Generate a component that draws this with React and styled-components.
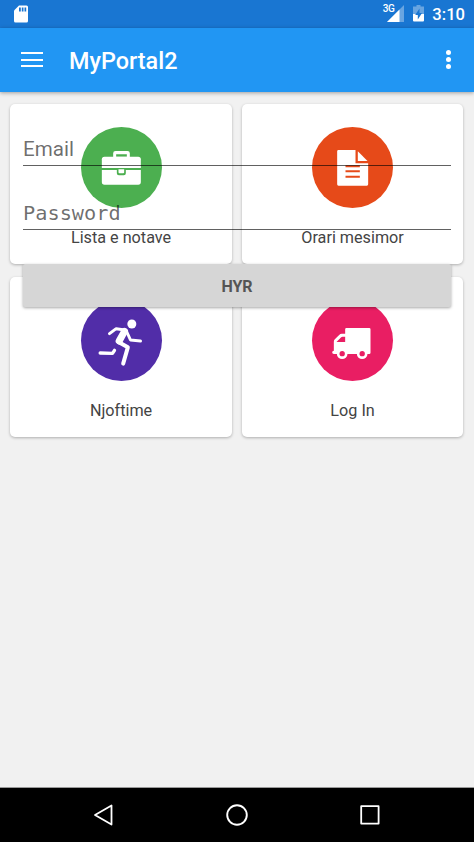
import React from 'react'
import styled, { createGlobalStyle } from 'styled-components'

const GlobalStyle = createGlobalStyle`
    * { box-sizing: border-box; }
    body {
        margin: 0;
        font-family: Roboto, sans-serif;
        overflow: hidden;
    }
`;

const Screen = styled.div`
    display: flex;
    flex-direction: column;
    width: 474px;
    height: 842px;
    background: #f1f1f1;
`;

const StatusBar = styled.header`
    display: flex;
    align-items: center;
    height: 27.5px;
    padding: 0 9px 0 14px;
    background: #1976d2;
    color: #fff;
`;

const StatusIcons = styled.div`
    display: flex;
    align-items: center;
    margin-left: auto;
`;

const Network = styled.span`
    align-self: flex-start;
    margin-right: -7px;
    font-size: 10px;
    font-weight: 500;
    line-height: 12px;
    letter-spacing: -0.4px;
`;

const Clock = styled.span`
    margin-left: 8px;
    font-size: 16.6px;
    font-weight: 500;
    line-height: 20px;
    padding-top: 2px;
`;

const Toolbar = styled.div`
    position: relative;
    display: flex;
    align-items: center;
    height: 64.5px;
    padding: 0 23px 0 21px;
    background: #2196f3;
    box-shadow: 0 1px 4px rgba(0, 0, 0, 0.35);
    flex: none;
`;

const Title = styled.h1`
    flex: 1;
    margin: 3px 0 0 26px;
    color: #fff;
    font-size: 23.4px;
    font-weight: 500;
    line-height: 28px;
`;

const MenuIcon = styled.div`
    display: flex;
    flex-direction: column;
    gap: 4.2px;
    width: 22px;

    span {
        height: 2.2px;
        background: #fff;
    }
`;

const MoreIcon = styled.div`
    display: flex;
    flex-direction: column;
    gap: 2px;

    span {
        width: 5px;
        height: 5px;
        border-radius: 50%;
        background: #fff;
    }
`;

const Content = styled.main`
    position: relative;
    flex: 1;
`;

const CardGrid = styled.div`
    display: grid;
    grid-template-columns: 1fr 1fr;
    grid-auto-rows: 160px;
    gap: 13px 10px;
    padding: 12.3px 10.7px 0 10.3px;
`;

const Card = styled.section`
    display: flex;
    flex-direction: column;
    align-items: center;
    padding-top: 23px;
    background: #fff;
    border-radius: 5px;
    box-shadow: 0 1px 3px rgba(0, 0, 0, 0.28);
`;

const Circle = styled.div`
    width: 81px;
    height: 81px;
    border-radius: 50%;
    background: ${props => props.$color};

    svg { display: block; }
`;

const CardLabel = styled.p`
    margin: 19.6px 0 0;
    color: #444;
    font-size: 16.2px;
    line-height: 20px;
`;

// sits on top of the cards
const LoginForm = styled.form`
    position: absolute;
    top: 0;
    left: 0;
    right: 0;
    display: flex;
    flex-direction: column;
    padding: 38.3px 23px 0;
`;

const Field = styled.input`
    height: 35.5px;
    margin-bottom: 29px;
    padding: 2px 0 0;
    border: 0;
    border-bottom: 1px solid rgba(0, 0, 0, 0.62);
    border-radius: 0;
    outline: none;
    background: transparent;
    font-family: ${props => props.$mono ? '"DejaVu Sans Mono", monospace' : 'Roboto, sans-serif'};
    font-size: ${props => props.$mono ? '20.3px' : '20.6px'};

    &::placeholder {
        color: rgba(0, 0, 0, 0.58);
        opacity: 1;
    }
`;

const SubmitButton = styled.button`
    height: 43px;
    margin-top: 4.5px;
    padding: 2px 0 0;
    border: 0;
    border-radius: 2px;
    background: #d6d6d6;
    box-shadow: 0 1px 3px rgba(0, 0, 0, 0.35);
    color: #555;
    font-family: Roboto, sans-serif;
    font-size: 16px;
    font-weight: 700;
`;

const NavBar = styled.nav`
    display: flex;
    justify-content: space-between;
    align-items: center;
    height: 55.5px;
    padding: 0 93px 0 92px;
    background: #000;
    border-top: 1px solid #999;
`;

const SdIcon = () => (
    <svg width="14" height="18" viewBox="0 0 14 18">
        <path d="M5 .5h7.5Q14 .5 14 2v14q0 1.5-1.5 1.5h-11Q0 17.5 0 16V5.5z" fill="#fff" />
        <path d="M5 2.5h1.8v4H5zM7.8 2.5h1.7v4H7.8zM10.5 2.5h1.7v4h-1.7z" fill="#1976d2" />
    </svg>
)

const SignalIcon = () => (
    <svg width="17" height="17" viewBox="0 0 17 17">
        <path d="M17 0v17H0z" fill="#fff" opacity=".35" />
        <path d="M12.5 4.5V17H0z" fill="#fff" />
    </svg>
)

const BatteryWrap = styled.span`
    display: flex;
    margin-left: 9px;
`;

const BatteryIcon = () => (
    <BatteryWrap>
        <svg width="11" height="17" viewBox="0 0 11 17">
            <path d="M3.5 0h4v1.5H11V9H0V1.5h3.5z" fill="#fff" opacity=".35" />
            <path d="M0 9h11v6.5q0 1-1 1H1q-1 0-1-1z" fill="#fff" />
            <path d="M6.5 3.5 2.2 10h2.6v4.5L9 8H6.5z" fill="#1976d2" />
        </svg>
    </BatteryWrap>
)

const BriefcaseIcon = () => (
    <svg width="81" height="81" viewBox="-28.5 -9 243 243" fill="#fff">
        <path fillRule="evenodd" d="M68 82V70q0-7 7-7h36q7 0 7 7v12zM77 73v7h32v-7z" />
        <path d="M42 80h101q8 0 8 8v26H34V88q0-8 8-8z" />
        <path d="M34 120h45v10q0 6 6 6h15q6 0 6-6v-10h45v36q0 8-8 8H42q-8 0-8-8z" />
        <path d="M84 118h17v9q0 3-3 3H87q-3 0-3-3z" />
    </svg>
)

const DocumentIcon = () => (
    <svg width="81" height="81" viewBox="230.5 96 243 243" fill="#fff">
        <path fillRule="evenodd" d="M310 165h51v40h38v63q0 4-4 4h-85q-4 0-4-4v-99q0-4 4-4zM331 211v6h43v-6zM331 226v6h43v-6zM331 242v6h43v-6z" />
        <path d="M368 169l29 29h-29z" />
    </svg>
)

const RunnerIcon = () => (
    <svg width="81" height="81" viewBox="-28.5 -30 243 243" fill="none" stroke="#fff" strokeLinecap="round" strokeLinejoin="round">
        <circle cx="124" cy="42" r="13.5" fill="#fff" stroke="none" />
        <path d="M57 71l20-15 26 4" strokeWidth="9" />
        <path d="M109 66l11 24 30 3" strokeWidth="9" />
        <path d="M102 64L86 93" strokeWidth="21" />
        <path d="M84 96l28 16-14 49" strokeWidth="12" />
        <path d="M29 129l37 1 6-9" strokeWidth="10" />
    </svg>
)

const TruckIcon = () => (
    <svg width="81" height="81" viewBox="-30.5 -30 243 243" fill="#fff">
        <path fillRule="evenodd" d="M73 54h68q4 0 4 4v70q0 4-4 4H35q-5 0-5-5t5-5V95q0-4 3-7l13-13q3-4 8-4h10V58q0-4 4-4zM43 96h26V80h-8q-2 0-4 2z" />
        <circle cx="60" cy="131" r="16" />
        <circle cx="120" cy="131" r="16" />
        <circle cx="60" cy="131" r="8" fill="#e91e63" />
        <circle cx="120" cy="131" r="8" fill="#e91e63" />
    </svg>
)

const cards = [
    { label: 'Lista e notave', color: '#4caf50', Icon: BriefcaseIcon },
    { label: 'Orari mesimor', color: '#e64a19', Icon: DocumentIcon },
    { label: 'Njoftime', color: '#512da8', Icon: RunnerIcon },
    { label: 'Log In', color: '#e91e63', Icon: TruckIcon },
]

const App = () => {
    return (
        <Screen>
            <GlobalStyle />
            <StatusBar>
                <SdIcon />
                <StatusIcons>
                    <Network>3G</Network>
                    <SignalIcon />
                    <BatteryIcon />
                    <Clock>3:10</Clock>
                </StatusIcons>
            </StatusBar>
            <Toolbar>
                <MenuIcon><span /><span /><span /></MenuIcon>
                <Title>MyPortal2</Title>
                <MoreIcon><span /><span /><span /></MoreIcon>
            </Toolbar>
            <Content>
                <CardGrid>
                    {cards.map(({ label, color, Icon }) => (
                        <Card key={label}>
                            <Circle $color={color}><Icon /></Circle>
                            <CardLabel>{label}</CardLabel>
                        </Card>
                    ))}
                </CardGrid>
                <LoginForm onSubmit={e => e.preventDefault()}>
                    <Field type="email" placeholder="Email" />
                    <Field type="password" placeholder="Password" $mono />
                    <SubmitButton>HYR</SubmitButton>
                </LoginForm>
            </Content>
            <NavBar>
                <svg width="22" height="22" viewBox="0 0 22 22" fill="none" stroke="#fff" strokeWidth="1.8" strokeLinejoin="round">
                    <path d="M19.5 1.5v19L3 11z" />
                </svg>
                <svg width="22" height="22" viewBox="0 0 22 22" fill="none" stroke="#fff" strokeWidth="1.9">
                    <circle cx="11" cy="11" r="9.8" />
                </svg>
                <svg width="22" height="22" viewBox="0 0 22 22" fill="none" stroke="#fff" strokeWidth="1.8" strokeLinejoin="round">
                    <path d="M2.2 2.2h17.4v17.4H2.2z" />
                </svg>
            </NavBar>
        </Screen>
    )
};

export default App
